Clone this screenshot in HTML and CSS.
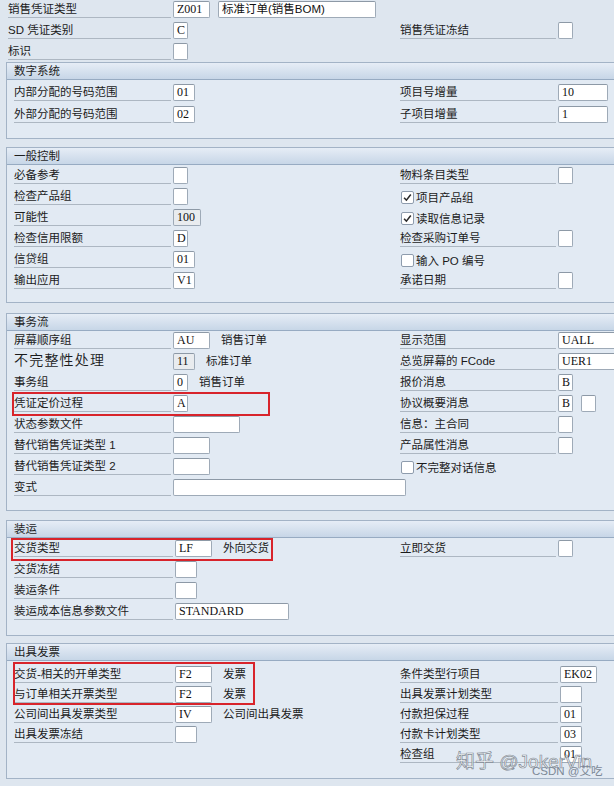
FILE: index.html
```html
<!DOCTYPE html>
<html>
<head>
<meta charset="utf-8">
<title>销售凭证类型</title>
<link rel="stylesheet" href="styles.css">
</head>
<body>
<div class="screen">
  <div class="top">
    <div class="cols">
      <div class="col col-l">
        <div class="row"><span class="lbl">销售凭证类型</span><span class="f w4">Z001</span><span class="f txt wdesc">标准订单(销售BOM)</span></div>
        <div class="row"><span class="lbl">SD 凭证类别</span><span class="f w1">C</span></div>
        <div class="row"><span class="lbl">标识</span><span class="f w1"></span></div>
      </div>
      <div class="col col-r">
        <div class="row"></div>
        <div class="row"><span class="lbl">销售凭证冻结</span><span class="f w1"></span></div>
      </div>
    </div>
  </div>

  <section class="group g1">
    <div class="ghead">数字系统</div>
    <div class="gbody cols">
      <div class="col col-l">
        <div class="row"><span class="lbl">内部分配的号码范围</span><span class="f w2">01</span></div>
        <div class="row"><span class="lbl">外部分配的号码范围</span><span class="f w2">02</span></div>
      </div>
      <div class="col col-r">
        <div class="row"><span class="lbl">项目号增量</span><span class="f w50">10</span></div>
        <div class="row"><span class="lbl">子项目增量</span><span class="f w50">1</span></div>
      </div>
    </div>
  </section>

  <section class="group g2">
    <div class="ghead">一般控制</div>
    <div class="gbody cols">
      <div class="col col-l">
        <div class="row"><span class="lbl">必备参考</span><span class="f w1"></span></div>
        <div class="row"><span class="lbl">检查产品组</span><span class="f w1"></span></div>
        <div class="row"><span class="lbl">可能性</span><span class="f w3 ro">100</span></div>
        <div class="row"><span class="lbl">检查信用限额</span><span class="f w1">D</span></div>
        <div class="row"><span class="lbl">信贷组</span><span class="f w2">01</span></div>
        <div class="row"><span class="lbl">输出应用</span><span class="f w2">V1</span></div>
      </div>
      <div class="col col-r">
        <div class="row"><span class="lbl">物料条目类型</span><span class="f w1"></span></div>
        <div class="row chk"><span class="cb"><svg viewBox="0 0 12 12" width="11" height="11"><path d="M2.3 6.2 L4.8 8.9 L9.6 2.8" fill="none" stroke="#2a2a2a" stroke-width="1.7"/></svg></span><span class="ctext">项目产品组</span></div>
        <div class="row chk"><span class="cb"><svg viewBox="0 0 12 12" width="11" height="11"><path d="M2.3 6.2 L4.8 8.9 L9.6 2.8" fill="none" stroke="#2a2a2a" stroke-width="1.7"/></svg></span><span class="ctext">读取信息记录</span></div>
        <div class="row"><span class="lbl">检查采购订单号</span><span class="f w1"></span></div>
        <div class="row chk"><span class="cb"></span><span class="ctext">输入 PO 编号</span></div>
        <div class="row"><span class="lbl">承诺日期</span><span class="f w1"></span></div>
      </div>
    </div>
  </section>

  <section class="group g3">
    <div class="ghead">事务流</div>
    <div class="gbody cols">
      <div class="col col-l">
        <div class="row"><span class="lbl">屏幕顺序组</span><span class="f w4">AU</span><span class="desc">销售订单</span></div>
        <div class="row"><span class="lbl big">不完整性处理</span><span class="f w2 ro">11</span><span class="desc">标准订单</span></div>
        <div class="row"><span class="lbl">事务组</span><span class="f w1">0</span><span class="desc">销售订单</span></div>
        <div class="row hl-price"><span class="lbl">凭证定价过程</span><span class="f w1">A</span></div>
        <div class="row"><span class="lbl">状态参数文件</span><span class="f w66"></span></div>
        <div class="row"><span class="lbl">替代销售凭证类型 1</span><span class="f w4"></span></div>
        <div class="row"><span class="lbl">替代销售凭证类型 2</span><span class="f w4"></span></div>
        <div class="row"><span class="lbl">变式</span><span class="f w232"></span></div>
      </div>
      <div class="col col-r">
        <div class="row"><span class="lbl">显示范围</span><span class="f w60">UALL</span></div>
        <div class="row"><span class="lbl">总览屏幕的 FCode</span><span class="f w60">UER1</span></div>
        <div class="row"><span class="lbl">报价消息</span><span class="f w1">B</span></div>
        <div class="row"><span class="lbl">协议概要消息</span><span class="f w1">B</span><span class="f w1 gap8"></span></div>
        <div class="row"><span class="lbl">信息：主合同</span><span class="f w1"></span></div>
        <div class="row"><span class="lbl">产品属性消息</span><span class="f w1"></span></div>
        <div class="row chk"><span class="cb"></span><span class="ctext">不完整对话信息</span></div>
      </div>
    </div>
  </section>

  <section class="group g4">
    <div class="ghead">装运</div>
    <div class="gbody cols">
      <div class="col col-l">
        <div class="row hl-ship"><span class="lbl">交货类型</span><span class="f w4">LF</span><span class="desc">外向交货</span></div>
        <div class="row"><span class="lbl">交货冻结</span><span class="f w2"></span></div>
        <div class="row"><span class="lbl">装运条件</span><span class="f w2"></span></div>
        <div class="row"><span class="lbl">装运成本信息参数文件</span><span class="f w113">STANDARD</span></div>
      </div>
      <div class="col col-r">
        <div class="row"><span class="lbl">立即交货</span><span class="f w1"></span></div>
      </div>
    </div>
  </section>

  <section class="group g5">
    <div class="ghead">出具发票</div>
    <div class="gbody cols">
      <div class="col col-l">
        <div class="hl-bill">
          <div class="row"><span class="lbl">交货-相关的开单类型</span><span class="f w4">F2</span><span class="desc">发票</span></div>
          <div class="row"><span class="lbl">与订单相关开票类型</span><span class="f w4">F2</span><span class="desc">发票</span></div>
        </div>
        <div class="row"><span class="lbl">公司间出具发票类型</span><span class="f w4">IV</span><span class="desc">公司间出具发票</span></div>
        <div class="row"><span class="lbl">出具发票冻结</span><span class="f w2"></span></div>
      </div>
      <div class="col col-r">
        <div class="row"><span class="lbl">条件类型行项目</span><span class="f w4">EK02</span></div>
        <div class="row"><span class="lbl">出具发票计划类型</span><span class="f w2"></span></div>
        <div class="row"><span class="lbl">付款担保过程</span><span class="f w2">01</span></div>
        <div class="row"><span class="lbl">付款卡计划类型</span><span class="f w2">03</span></div>
        <div class="row"><span class="lbl">检查组</span><span class="f w2">01</span></div>
      </div>
    </div>
  </section>
</div>
<div class="wm">知乎 @JokerVin</div>
<div class="wm2">CSDN @艾吃</div>
</body>
</html>
```

FILE: styles.css
```css
*, *::before, *::after { box-sizing: border-box; }
html, body { margin: 0; padding: 0; }
body {
  width: 614px;
  height: 786px;
  overflow: hidden;
  position: relative;
  background: #dee6ef;
  font-family: "Liberation Sans", "Noto Sans CJK SC", sans-serif;
  font-size: 11.5px;
  color: #1b1b1b;
}
.screen { width: 660px; }

.top { height: 62px; padding-top: 1px; padding-left: 8px; }
.top .col-l { width: 392px; }
.top .col-l .lbl { width: 163px; }

.cols { display: flex; }
.col { display: flex; flex-direction: column; flex: none; }

.group {
  margin-left: 6px;
  border: 1px solid #a3b3c6;
  border-right: none;
  background: #e2eaf3;
}
.ghead {
  height: 17px;
  line-height: 16px;
  padding-left: 7px;
  border-bottom: 1px solid #97abc2;
  background: linear-gradient(#e6edf6, #c7d6e7);
  color: #1e1e1e;
}
.gbody { padding-left: 7px; }
.gbody .col-l { width: 386px; }

.g1 .gbody { padding-top: 4px; padding-bottom: 10px; }
.g1 .row { height: 22px; }
.g2 { margin-top: 8px; }
.g2 .gbody { padding-top: 2px; padding-bottom: 9px; }
.g3 { margin-top: 10px; }
.g3 .gbody { padding-top: 1px; padding-bottom: 10px; }
.g4 { margin-top: 9px; }
.g4 .gbody { padding-top: 2px; padding-bottom: 11px; }
.g5 { margin-top: 7px; }
.g5 .gbody { padding-top: 5px; padding-bottom: 12px; }
.g5 .row { height: 20px; }
.g4 .col-l .lbl, .g5 .col-l .lbl { width: 159px; }
.g5 .col-r .lbl { width: 158px; }

.row {
  display: flex;
  align-items: flex-start;
  height: 21px;
  position: relative;
}
.lbl {
  flex: none;
  width: 157px;
  margin-right: 2px;
  height: 17px;
  line-height: 17px;
  border-bottom: 1px solid #adb7c2;
  white-space: nowrap;
}
.col-r .lbl { width: 156px; }
.lbl.big { font-size: 14px; letter-spacing: 1.2px; line-height: 15px; font-weight: 350; color: #1b1b1b; border-bottom-color: transparent; }

.f {
  height: 17px;
  flex: none;
  border: 1px solid #9eaab7;
  border-top-color: #8d99a6;
  border-radius: 2px;
  background: #fff;
  font-family: "Liberation Serif", serif;
  font-size: 12px;
  line-height: 15px;
  padding-left: 3px;
  white-space: nowrap;
  overflow: hidden;
  color: #111;
}
.f.ro { background: #e9ecef; }
.f.txt { font-family: "Liberation Sans", "Noto Sans CJK SC", sans-serif; font-size: 11.5px; }
.w1 { width: 15px; }
.w2 { width: 22px; }
.w3 { width: 28px; }
.w4 { width: 37px; }
.w50 { width: 50px; }
.w60 { width: 60px; }
.w66 { width: 67px; }
.w113 { width: 114px; }
.w232 { width: 233px; }
.wdesc { width: 158px; margin-left: 8px; }
.gap8 { margin-left: 8px; }
.desc { margin-left: 11px; line-height: 17px; white-space: nowrap; }

.chk { align-items: center; padding-bottom: 2px; }
.cb {
  flex: none;
  width: 13px;
  height: 13px;
  margin-left: 1px;
  border: 1px solid #8e9cad;
  border-radius: 2px;
  background: #fff;
  display: flex;
  align-items: center;
  justify-content: center;
}
.ctext { margin-left: 2px; line-height: 16px; white-space: nowrap; }

.hl-price::after, .hl-ship::after, .hl-bill::after {
  content: "";
  position: absolute;
  border: 2px solid #d8242b;
  pointer-events: none;
}
.hl-price::after { left: -2px; top: -3px; width: 258px; height: 24px; }
.hl-ship::after { left: -3px; top: -2px; width: 262px; height: 23px; }
.hl-bill { position: relative; }
.hl-bill::after { left: -1px; top: -4px; width: 242px; height: 43px; }

.wm {
  position: absolute;
  left: 456px;
  top: 746px;
  font-family: "Liberation Sans", "Noto Sans CJK SC", sans-serif;
  font-size: 19px;
  color: rgba(255, 255, 255, 0.85);
  -webkit-text-stroke: 0.7px rgba(100, 110, 122, 0.8);
  white-space: nowrap;
}
.wm2 {
  position: absolute;
  left: 532px;
  top: 762px;
  font-size: 11.5px;
  color: #7c8896;
  white-space: nowrap;
}
```
